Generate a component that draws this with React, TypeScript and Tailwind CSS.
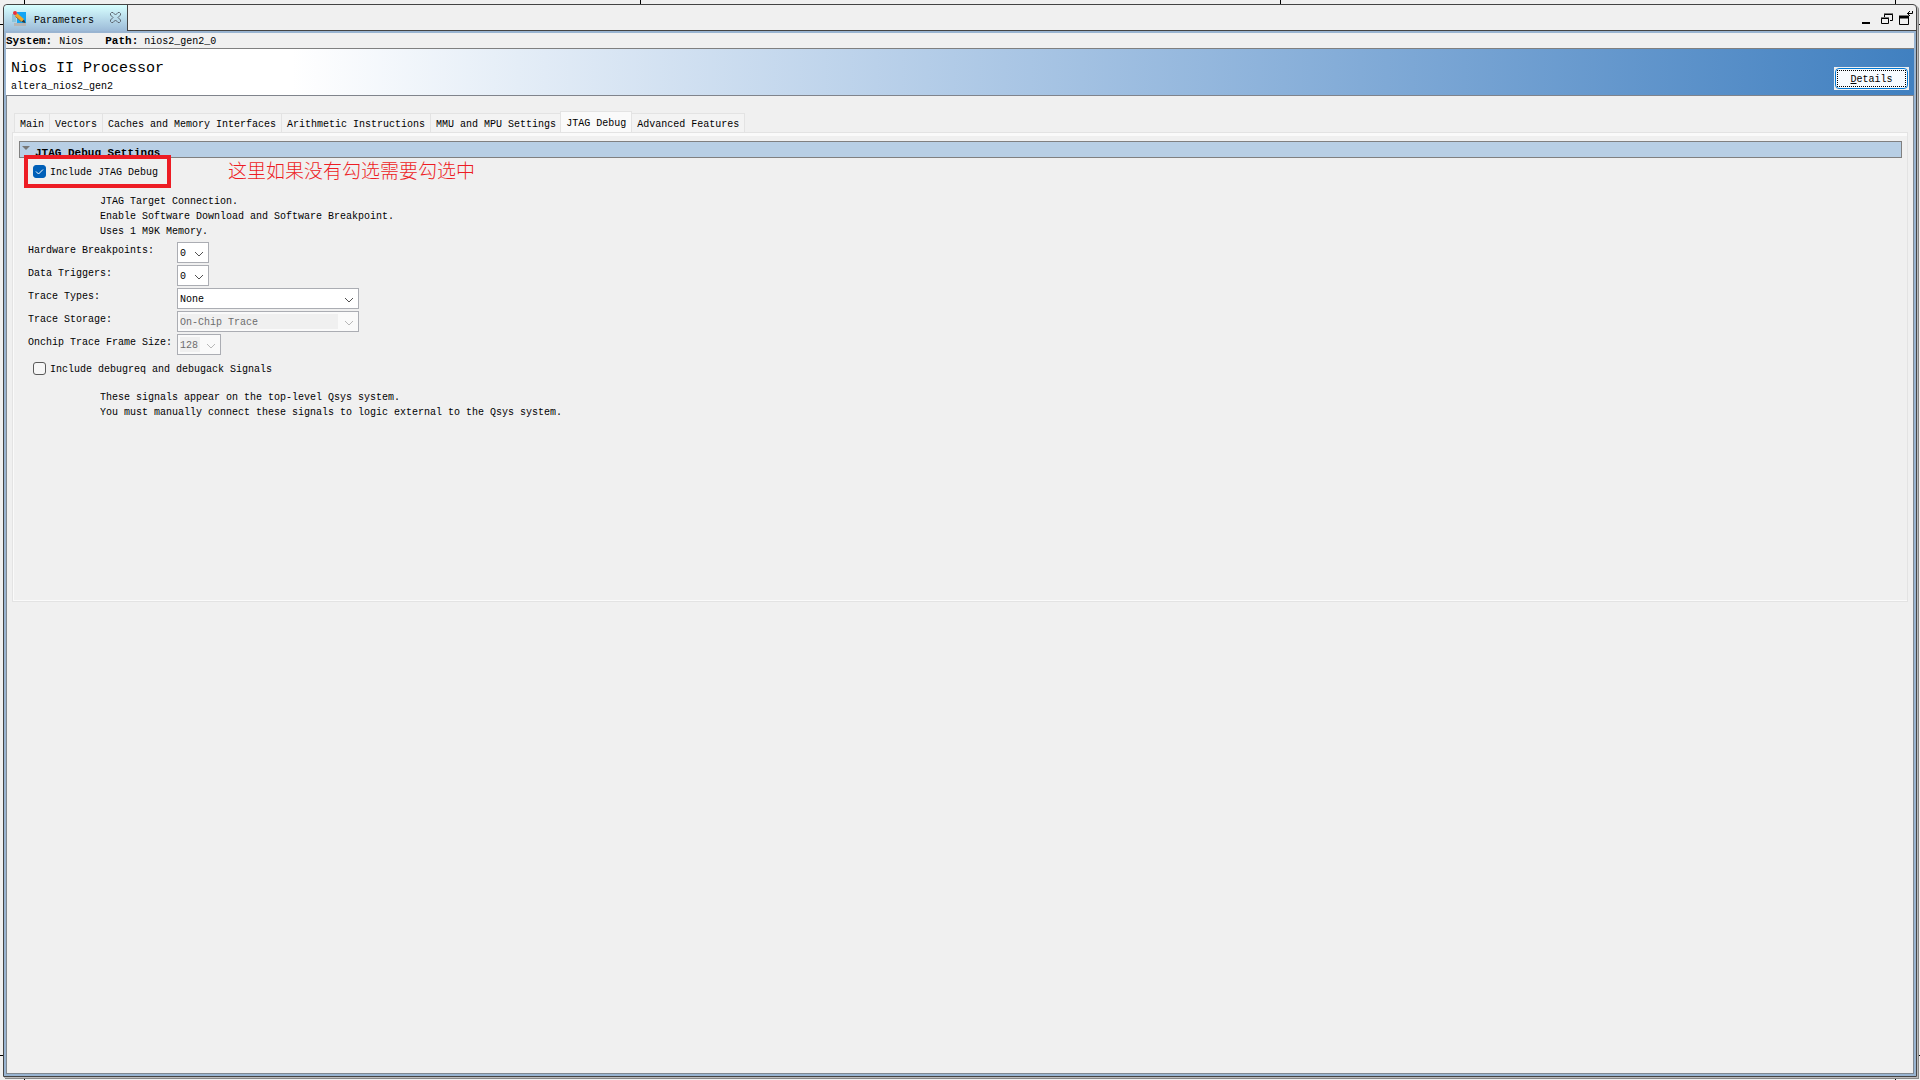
import type { ReactNode } from "react";

const mono = "font-['Liberation_Mono','Noto_Sans_CJK_SC',monospace]";

const tabs = [
  "Main",
  "Vectors",
  "Caches and Memory Interfaces",
  "Arithmetic Instructions",
  "MMU and MPU Settings",
  "JTAG Debug",
  "Advanced Features",
];

const fields = [
  { id: "hw", label: "Hardware Breakpoints:", value: "0", width: "w-8", disabled: false },
  { id: "dt", label: "Data Triggers:", value: "0", width: "w-8", disabled: false },
  { id: "tt", label: "Trace Types:", value: "None", width: "w-[182px]", disabled: false },
  { id: "ts", label: "Trace Storage:", value: "On-Chip Trace", width: "w-[182px]", disabled: true },
  { id: "fs", label: "Onchip Trace Frame Size:", value: "128", width: "w-11", disabled: true },
];

function PencilIcon() {
  return (
    <svg width="15" height="16" viewBox="0 0 15 16" aria-hidden="true">
      <rect x="0" y="3" width="4" height="8" fill="#8cc4dc" />
      <rect x="5" y="1" width="9" height="11" fill="#12a5f4" />
      <rect x="2" y="12" width="12" height="3" fill="#b5b5b5" />
      <path d="M4 3.500L11 9.500" stroke="#f0a828" strokeWidth="3.500" />
      <path d="M3.500 5.500L9 10.500" stroke="#a86a20" />
      <circle cx="3" cy="2" r="2" fill="#e8303c" />
      <path d="M9.500 11l2.500-2.500 1.500 3.500z" fill="#333" />
    </svg>
  );
}

function CloseIcon() {
  return (
    <svg width="11" height="11" viewBox="0 0 11 11" fill="none" stroke="#5c6670" aria-hidden="true">
      <path d="M1.500 .5h1.500L5.500 3 8 .5h1.500l1 1V3L8 5.500l2.500 2.500v1.500l-1 1H8L5.500 8 3 10.500H1.500l-1-1V8L3 5.500.5 3V1.500z" />
    </svg>
  );
}

function Check({ id, checked, children }: { id: string; checked?: boolean; children: ReactNode }) {
  return (
    <div className="flex items-center gap-1">
      <span className="grid size-[13px] place-items-center">
        <input
          id={id}
          type="checkbox"
          defaultChecked={checked}
          className="peer col-start-1 row-start-1 size-[13px] appearance-none rounded-[3px] border border-[#5a5a5a] bg-[#f6f6f6] checked:border-[#005fb8] checked:bg-[#005fb8]"
        />
        <svg
          className="pointer-events-none col-start-1 row-start-1 hidden peer-checked:block"
          width="13"
          height="13"
          viewBox="0 0 13 13"
          fill="none"
          stroke="#fff"
          aria-hidden="true"
        >
          <path d="M3 6.500l2.500 2.500L10 4.500" />
        </svg>
      </span>
      <label htmlFor={id} className="pt-0.5">
        {children}
      </label>
    </div>
  );
}

function Field({ id, label, value, width, disabled }: (typeof fields)[number]) {
  return (
    <div className="flex items-start">
      <label htmlFor={id} className="w-[149px] whitespace-nowrap pt-px">
        {label}
      </label>
      <div
        className={`flex h-[21px] items-center border border-[#abadb3] p-0.5 ${width} ${disabled ? "bg-[#fafafa]" : "bg-white"}`}
      >
        <select
          id={id}
          disabled={disabled}
          className="h-[15px] min-w-0 flex-1 appearance-none pt-px text-black disabled:bg-[#f0f0f0] disabled:text-[#6d6d6d] disabled:opacity-100"
        >
          <option>{value}</option>
        </select>
        <svg
          className={`ml-1.5 mr-0.5 mt-0.5 shrink-0 ${disabled ? "text-[#b8b8b8]" : "text-[#505050]"}`}
          width="10"
          height="6"
          viewBox="0 0 10 6"
          fill="none"
          stroke="currentColor"
          aria-hidden="true"
        >
          <path d="M1 1l4 4 4-4" />
        </svg>
      </div>
    </div>
  );
}

function Ticks() {
  return (
    <div aria-hidden="true">
      <i className="absolute left-6 top-0 h-1 w-px bg-black" />
      <i className="absolute left-1/3 top-0 h-1 w-px bg-black" />
      <i className="absolute left-2/3 top-0 h-1 w-px bg-black" />
      <i className="absolute right-6 top-0 h-1 w-px bg-black" />
      <i className="absolute left-0 top-6 h-px w-[3px] bg-black" />
      <i className="absolute right-0 top-6 h-px w-0.5 bg-black" />
      <i className="absolute bottom-6 left-0 h-px w-[3px] bg-black" />
      <i className="absolute bottom-6 right-0 h-px w-0.5 bg-black" />
      <i className="absolute bottom-0 left-6 h-[3px] w-px bg-black" />
      <i className="absolute bottom-0 right-6 h-[3px] w-px bg-black" />
    </div>
  );
}

export default function App() {
  return (
    <div
      className={`relative flex min-h-screen flex-col bg-[#f0f0f0] px-[3px] pb-[3px] pt-1 text-[10px] leading-[15px] text-black ${mono}`}
    >
      <Ticks />
      <div className="relative flex flex-1 flex-col rounded-t border border-[#444] shadow-[1px_1px_0_#bbb,2px_2px_0_#888]">
        <header className="flex h-[26px] items-stretch">
          <div className="-mb-px flex w-[124px] items-center rounded-tl border-r border-[#444] bg-linear-to-b from-[#d8ffff] to-[#9ab8d6] pl-2">
            <PencilIcon />
            <span className="ml-[7px] flex-1 pt-1">Parameters</span>
            <button type="button" aria-label="Close Parameters" className="mr-1.5 pb-0.5">
              <CloseIcon />
            </button>
          </div>
          <div className="flex flex-1 items-center justify-end border-b border-[#444] pr-0.5 pt-0.5">
            <button type="button" aria-label="Minimize" className="mr-2.5">
              <svg width="10" height="12" viewBox="0 0 10 12" aria-hidden="true">
                <path d="M1 9h8v2H1z" />
              </svg>
            </button>
            <button type="button" aria-label="Restore" className="mr-1.5">
              <svg width="12" height="12" viewBox="0 0 12 12" fill="none" stroke="#000" aria-hidden="true">
                <path d="M3.500 4V1.500h8V7.500H9M3 1h9" />
                <path d="M.5 5.500h7v5h-7zM0 5h8" />
              </svg>
            </button>
            <button type="button" aria-label="Detach">
              <svg width="15" height="15" viewBox="0 0 15 15" fill="none" stroke="#000" aria-hidden="true">
                <path d="M.5 5.500h9v8h-9z" />
                <path d="M0 6h10" strokeWidth="3" />
                <path d="M8 2.500h5.500V0M11 0L8.500 2.500 11 5" />
              </svg>
            </button>
          </div>
        </header>

        <div className="flex flex-1 flex-col border-2 border-[#99b4d1]">
          <div className="flex h-4 items-center border-b border-[#808080] pt-0.5">
            <b className="text-[11px]">System:</b>
            <span className="ml-[7px]">Nios</span>
            <b className="ml-[22px] text-[11px]">Path:</b>
            <span className="ml-1.5">nios2_gen2_0</span>
          </div>
          <div className="flex h-[47px] items-center justify-between border-b border-[#80848c] bg-linear-to-r from-white from-15% to-[#4080c0] px-[5px]">
            <div className="pt-1.5">
              <h1 className="text-[15px] leading-5">Nios II Processor</h1>
              <p className="h-3 overflow-hidden">altera_nios2_gen2</p>
            </div>
            <div className="mt-[13px] bg-[#f0f0f0] p-px">
              <button
                type="button"
                className="flex h-[21px] w-[73px] items-center justify-center rounded-sm border border-[#0078d4] bg-[#f7fbff] p-px"
              >
                <span className="flex h-full w-full items-center justify-center border border-dotted border-black pt-0.5">
                  <span>
                    <u>D</u>etails
                  </span>
                </span>
              </button>
            </div>
          </div>

          <main className="flex flex-1 flex-col border border-t-0 border-[#808890] bg-[#f0f0f0] px-[5px] pt-[15px]">
            <div role="tablist" className="flex items-end pl-0.5">
              {tabs.map((t) =>
                t === "JTAG Debug" ? (
                  <button
                    key={t}
                    type="button"
                    role="tab"
                    aria-selected="true"
                    className="-ml-px -mb-px h-[22px] border border-b-0 border-[#e3e3e3] bg-[#fafafa] px-[5px] pt-px"
                  >
                    {t}
                  </button>
                ) : (
                  <button
                    key={t}
                    type="button"
                    role="tab"
                    aria-selected="false"
                    className="h-[19px] border border-b-0 border-r-0 border-[#e3e3e3] bg-[#f3f3f3] px-[5px] pt-[3px] last:border-l-0 last:border-r"
                  >
                    {t}
                  </button>
                ),
              )}
            </div>
            <div className="h-[470px] border border-[#e3e3e3] pl-1.5 pr-[5px] pt-2 shadow-[inset_0_3px_0_#fafafa,inset_1px_0_0_#fafafa,inset_0_-1px_0_#fafafa]">
              <h2 className="flex h-[17px] items-start overflow-hidden border border-[#808080] bg-[#b8cfe5] text-[11px] font-bold">
                <svg className="ml-0.5 mt-1" width="8" height="4" viewBox="0 0 8 4" fill="#777" aria-hidden="true">
                  <path d="M0 0h8L4 4z" />
                </svg>
                <span className="ml-[5px] mt-1">JTAG Debug Settings</span>
              </h2>
              <div className="relative -mt-[3px] ml-[5px] flex items-center">
                <div className="flex h-[33px] w-[147px] items-center border-4 border-[#ed1c24] pl-[5px]">
                  <Check id="jtag" checked>
                    Include JTAG Debug
                  </Check>
                </div>
                <p className="ml-[57px] pt-[3px] text-[19px] font-light text-[#ed1c24]">这里如果没有勾选需要勾选中</p>
              </div>
              <p className="ml-[81px] mt-1.5 h-[42px] overflow-hidden">
                JTAG Target Connection.
                <br />
                Enable Software Download and Software Breakpoint.
                <br />
                Uses 1 M9K Memory.
              </p>
              <div className="ml-[9px] mt-1.5 flex flex-col gap-0.5">
                {fields.map((f) => (
                  <Field key={f.id} {...f} />
                ))}
              </div>
              <div className="ml-3.5 mt-[5px]">
                <Check id="dbg">Include debugreq and debugack Signals</Check>
              </div>
              <p className="ml-[81px] mt-[13px] h-7 overflow-hidden">
                These signals appear on the top-level Qsys system.
                <br />
                You must manually connect these signals to logic external to the Qsys system.
              </p>
            </div>
          </main>
        </div>
      </div>
    </div>
  );
}
